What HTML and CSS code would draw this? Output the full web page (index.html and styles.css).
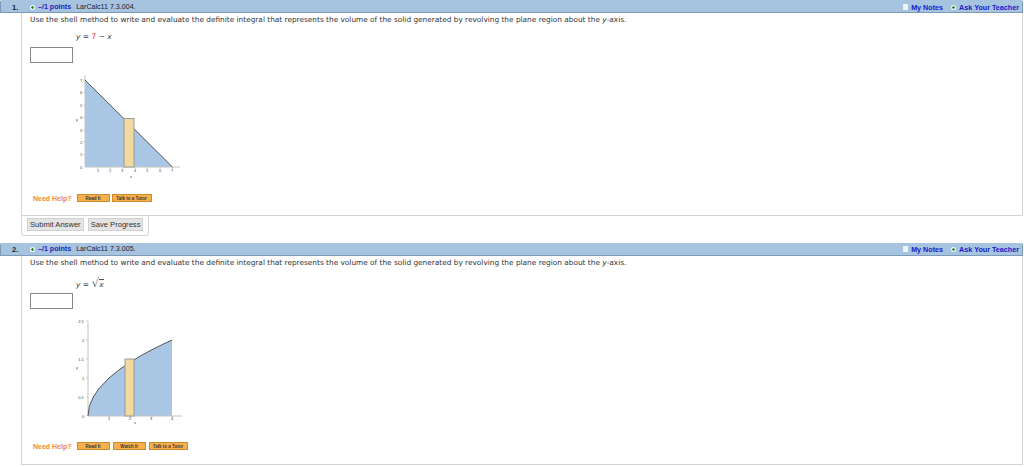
FILE: index.html
```html
<!DOCTYPE html>
<html lang="en">
<head>
<meta charset="utf-8">
<title>Questions</title>
<link rel="stylesheet" href="styles.css">
</head>
<body>
<section class="question q1">
  <header class="bar">
    <span class="num">1.</span>
    <span class="dot"></span>
    <span class="pts">–/1 points</span>
    <span class="ref">LarCalc11 7.3.004.</span>
    <span class="links">
      <span class="note"></span><span class="link">My Notes</span>
      <span class="dot gap"></span><span class="link">Ask Your Teacher</span>
    </span>
  </header>
  <div class="body">
    <p class="prompt">Use the shell method to write and evaluate the definite integral that represents the volume of the solid generated by revolving the plane region about the <i>y</i>-axis.</p>
    <p class="eq"><i>y</i> = <span class="red">7</span> − <i>x</i></p>
    <div class="answer"></div>
    <svg class="graph g1" width="150" height="108" viewBox="0 0 150 108">
      <polygon class="area" points="25,7 112.5,94 25,94"/>
      <path class="axis" d="M25 2V94H120"/>
      <path class="ticks" d="M23 7h2M23 19.4h2M23 31.9h2M23 44.3h2M23 56.7h2M23 69.1h2M23 81.6h2M37.5 94v2M50 94v2M62.5 94v2M75 94v2M87.5 94v2M100 94v2M112.5 94v2"/>
      <path class="curve" d="M25 7L112.5 94"/>
      <rect class="bar-rect" x="64" y="45.5" width="10" height="48.5"/>
      <g class="lbl">
        <text x="21" y="8.500">7</text><text x="21" y="21">6</text><text x="21" y="33.500">5</text><text x="21" y="46">4</text><text x="21" y="58.500">3</text><text x="21" y="70.500">2</text><text x="21" y="83">1</text><text x="21" y="96">0</text>
        <text x="38" y="99">1</text><text x="50" y="99">2</text><text x="62" y="99">3</text><text x="75" y="99">4</text><text x="87" y="99">5</text><text x="100" y="99">6</text><text x="112" y="99">7</text>
        <text x="71" y="104.500">x</text><text x="17" y="48">y</text>
      </g>
    </svg>
    <div class="help h1">
      <span class="need">Need Help?</span>
      <span class="btn w1">Read It</span>
      <span class="btn w3">Talk to a Tutor</span>
    </div>
  </div>
  <div class="actions">
    <span class="action">Submit Answer</span>
    <span class="action">Save Progress</span>
  </div>
</section>
<section class="question q2">
  <header class="bar">
    <span class="num">2.</span>
    <span class="dot"></span>
    <span class="pts">–/1 points</span>
    <span class="ref">LarCalc11 7.3.005.</span>
    <span class="links">
      <span class="note"></span><span class="link">My Notes</span>
      <span class="dot gap"></span><span class="link">Ask Your Teacher</span>
    </span>
  </header>
  <div class="body last">
    <p class="prompt">Use the shell method to write and evaluate the definite integral that represents the volume of the solid generated by revolving the plane region about the <i>y</i>-axis.</p>
    <p class="eq tall"><i>y</i> = <span class="root">√</span><span class="over"><i>x</i></span></p>
    <div class="answer"></div>
    <svg class="graph g2" width="150" height="112" viewBox="0 0 150 112">
      <polygon class="area" points="28,102 29.300,92.500 33.250,83 38.500,75.100 49,64 59.500,55.500 70,48.300 80.500,41.900 91,36.200 101.500,30.900 112,26 112,102"/>
      <path class="axis" d="M28 7V102H122"/>
      <path class="ticks" d="M26 7h2M26 26h2M26 45h2M26 64h2M26 83h2M49 102v2M70 102v2M91 102v2M112 102v2"/>
      <polyline class="curve" points="28,102 29.300,92.500 33.250,83 38.500,75.100 49,64 59.500,55.500 70,48.300 80.500,41.900 91,36.200 101.500,30.900 112,26"/>
      <rect class="bar-rect" x="65" y="45" width="9" height="57"/>
      <g class="lbl">
        <text x="21" y="8.500">2.5</text><text x="23" y="27.500">2</text><text x="21" y="46.500">1.5</text><text x="23" y="65.500">1</text><text x="21" y="84.500">0.5</text><text x="23" y="103.500">0</text>
        <text x="49" y="106">1</text><text x="70" y="106">2</text><text x="91" y="106">3</text><text x="112" y="106">4</text>
        <text x="75" y="110">x</text><text x="17" y="55">y</text>
      </g>
    </svg>
    <div class="help h2">
      <span class="need">Need Help?</span>
      <span class="btn w1">Read It</span>
      <span class="btn w1">Watch It</span>
      <span class="btn w2">Talk to a Tutor</span>
    </div>
  </div>
</section>
</body>
</html>
```
FILE: styles.css
```css
html, body { margin: 0; padding: 0; background: #fff; }
body { width: 1024px; height: 467px; overflow: hidden; font-family: "DejaVu Sans", sans-serif; color: #222; }
.question { display: block; }
.q2 { margin-top: 7px; }
.bar { display: flex; align-items: center; box-sizing: border-box; height: 13px; margin-right: 1px; padding: 1px 3px 0 11px; background: #a6c4df; border: 1px solid #7d9bb8; border-top-color: #a6c4df; border-radius: 2px 2px 0 0; line-height: 9px; font-family: "Liberation Sans", sans-serif; }
.q2 .bar { padding-top: 0; padding-bottom: 1px; }
.num { width: 18px; font-weight: 700; color: #223; font-size: 7.5px; }
.dot { width: 5px; height: 5px; border-radius: 50%; background: radial-gradient(circle, #2f8a3c 0 1px, #f4f4f4 1.5px); margin-right: 3px; }
.pts { color: #2222bb; font-weight: 700; font-size: 7.1px; margin-right: 5px; }
.ref { color: #223; font-size: 7.1px; }
.links { margin-left: auto; display: flex; align-items: center; }
.note { width: 5px; height: 6px; background: #f3f3f6; margin-right: 3px; }
.link { color: #1a1ac8; font-weight: 700; font-size: 7.2px; }
.gap { margin-left: 8px; margin-right: 3px; }
.body { margin-left: 21px; margin-right: 1px; box-sizing: border-box; height: 203px; padding-left: 8px; border: 1px solid #d4d4d4; border-top: 0; }
.body.last { height: 209px; }
.prompt { margin: 0; padding-top: 1px; height: 12px; font-size: 7.37px; line-height: 12px; color: #333; white-space: nowrap; }
.eq { margin: 0 0 0 46px; padding-top: 5px; height: 12px; font-size: 7.5px; line-height: 12px; color: #444; }
.eq.tall { padding-top: 8px; }
.red { color: #e33; }
.root { font-size: 12px; color: #777; }
.over { border-top: 1px solid #555; }
.answer { box-sizing: border-box; width: 43px; height: 16px; border: 1px solid #8a8a8a; margin-top: 4px; background: #fff; }
.graph { display: block; margin-left: 30px; }
.g1 { margin-top: 10px; }
.g2 { margin-top: 5px; }
.area { fill: #a9c6e4; }
.axis { fill: none; stroke: #c4c4c4; stroke-width: 1; }
.ticks { fill: none; stroke: #bbb; stroke-width: .6; }
.curve { fill: none; stroke: #555; stroke-width: 1; }
.bar-rect { fill: #f2d9a0; stroke: #999; stroke-width: 1; }
.lbl text { font: 4px "Liberation Sans", sans-serif; fill: #444; text-anchor: middle; }
.help { display: flex; align-items: center; font-family: "Liberation Sans", sans-serif; }
.h1 { margin-top: 13px; gap: 2px; }
.h2 { margin-top: 16px; gap: 3px; }
.h2 .need { margin-right: 2px; }
.need { color: #ee8c33; font-size: 7px; font-weight: 700; margin-left: 3px; margin-right: 3px; }
.btn { box-sizing: border-box; height: 8px; line-height: 7px; border: 1px solid #d08a2c; background: #f5b04d; color: #433; font-size: 4.5px; font-weight: 700; text-align: center; white-space: nowrap; }
.w1 { width: 33px; }
.w2 { width: 39px; }
.w3 { width: 40px; }
.actions { display: flex; gap: 4px; width: 128px; margin-left: 21px; box-sizing: border-box; height: 20px; padding: 2px 0 0 5px; border: 1px solid #d4d4d4; border-top: 0; border-radius: 0 0 3px 3px; font-family: "Liberation Sans", sans-serif; }
.action { height: 11px; line-height: 11px; padding: 0 2px; background: #e4e4e4; border: 1px solid #d0d0d0; font-size: 7.6px; color: #333; white-space: nowrap; }
```
